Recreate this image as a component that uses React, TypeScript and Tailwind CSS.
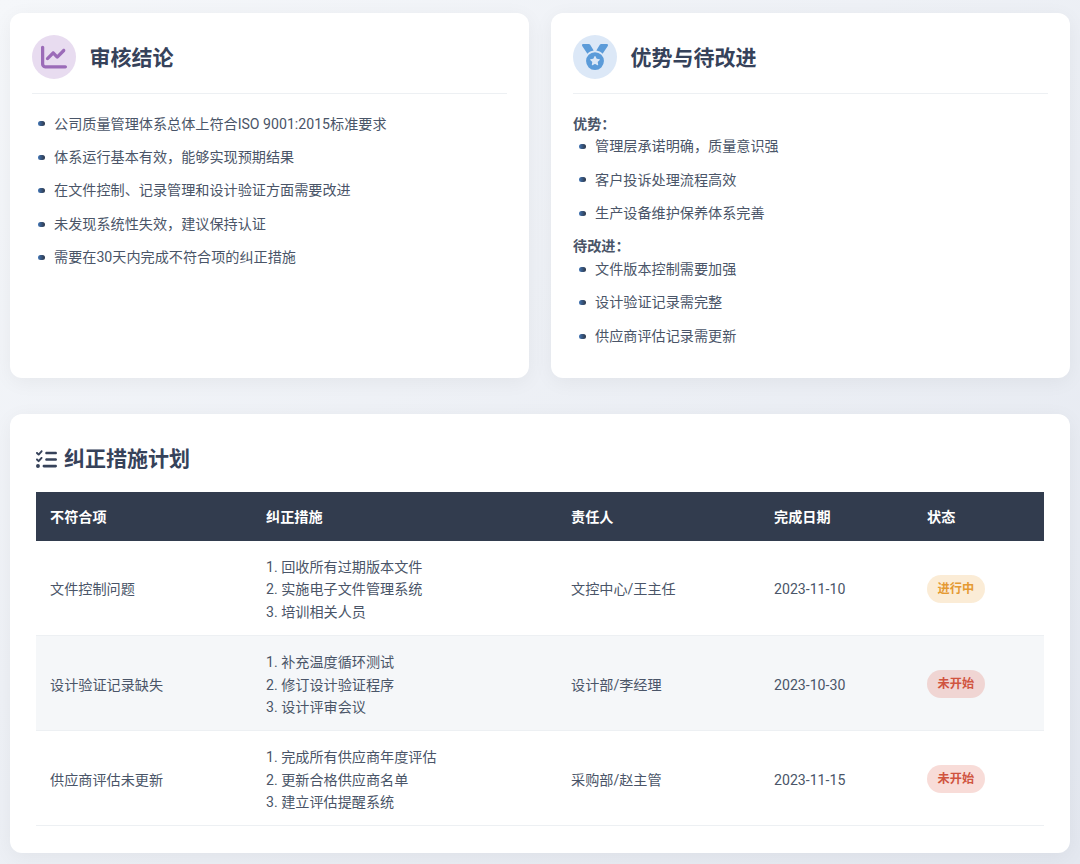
import { FaChartLine, FaMedal, FaListCheck } from 'react-icons/fa6';

const FONT = "font-['Roboto','Noto_Sans_CJK_SC',sans-serif]";

const CONCLUSIONS = [
  '公司质量管理体系总体上符合ISO 9001:2015标准要求',
  '体系运行基本有效\uFF0C能够实现预期结果',
  '在文件控制、记录管理和设计验证方面需要改进',
  '未发现系统性失效\uFF0C建议保持认证',
  '需要在30天内完成不符合项的纠正措施',
];

const STRENGTHS = ['管理层承诺明确\uFF0C质量意识强', '客户投诉处理流程高效', '生产设备维护保养体系完善'];
const IMPROVE = ['文件版本控制需要加强', '设计验证记录需完整', '供应商评估记录需更新'];

const ROWS = [
  {
    item: '文件控制问题',
    actions: ['1. 回收所有过期版本文件', '2. 实施电子文件管理系统', '3. 培训相关人员'],
    owner: '文控中心/王主任',
    date: '2023-11-10',
    status: '进行中',
  },
  {
    item: '设计验证记录缺失',
    actions: ['1. 补充温度循环测试', '2. 修订设计验证程序', '3. 设计评审会议'],
    owner: '设计部/李经理',
    date: '2023-10-30',
    status: '未开始',
  },
  {
    item: '供应商评估未更新',
    actions: ['1. 完成所有供应商年度评估', '2. 更新合格供应商名单', '3. 建立评估提醒系统'],
    owner: '采购部/赵主管',
    date: '2023-11-15',
    status: '未开始',
  },
];

function Bullets({ items }: { items: string[] }) {
  return (
    <ul className="flex flex-col gap-[10.8px]">
      {items.map((text) => (
        <li key={text} className="flex items-center pl-[6px] text-[14.14px] leading-[22.6px] text-[#4a5568]">
          <span className="mr-[9px] h-[5px] w-[7px] rounded-full bg-gradient-to-r from-[#3f74b5] to-[#2d3748]" />
          {text}
        </li>
      ))}
    </ul>
  );
}

function CardHeader({ icon, circle, title }: { icon: React.ReactNode; circle: string; title: string }) {
  return (
    <div className="mb-[18.6px] flex items-center gap-[13.5px] border-b border-[#edf0f3] pb-[14px]">
      <div className={`flex h-[44px] w-[44px] items-center justify-center rounded-full ${circle}`}>{icon}</div>
      <h2 className="pt-[3px] text-[21px] leading-[33px] font-bold text-[#36425a]">{title}</h2>
    </div>
  );
}

export default function App() {
  return (
    <div className={`${FONT} min-h-[864px] bg-gradient-to-br from-[#f5f7fa] to-[#e4e8f0] px-[10px] pt-[13px] pb-[11px]`}>
      <div className="grid grid-cols-2 gap-[22px]">
        <section className="h-[365px] rounded-[12px] bg-white p-[22px] shadow-[0_4px_20px_rgba(0,0,0,0.05)]">
          <CardHeader
            icon={<FaChartLine className="h-[26px] w-[26px] text-[#9b6bb8]" />}
            circle="bg-[#e8dcf0]"
            title="审核结论"
          />
          <Bullets items={CONCLUSIONS} />
        </section>

        <section className="h-[365px] rounded-[12px] bg-white p-[22px] shadow-[0_4px_20px_rgba(0,0,0,0.05)]">
          <CardHeader
            icon={<FaMedal className="h-[26px] w-[26px] text-[#5b9bd9]" />}
            circle="bg-[#dce8f7]"
            title="优势与待改进"
          />
          <p className="text-[14.14px] leading-[22.6px] font-bold text-[#4a5568]">{'优势\uFF1A'}</p>
          <Bullets items={STRENGTHS} />
          <p className="mt-[10.8px] text-[14.14px] leading-[22.6px] font-bold text-[#4a5568]">{'待改进\uFF1A'}</p>
          <Bullets items={IMPROVE} />
        </section>
      </div>

      <section className="mt-[36px] h-[439px] rounded-[12px] bg-white px-[26px] pt-[29px] shadow-[0_4px_20px_rgba(0,0,0,0.05)]">
        <h2 className="mb-[15.5px] flex items-center gap-[7px] text-[21px] leading-[33px] font-bold text-[#36425a]">
          <FaListCheck className="h-[21px] w-[21px]" />
          纠正措施计划
        </h2>
        <table className="w-full table-fixed border-collapse text-left text-[14.14px] leading-[22.6px]">
          <colgroup>
            <col className="w-[216px]" />
            <col className="w-[305px]" />
            <col className="w-[203px]" />
            <col className="w-[153px]" />
            <col className="w-[131px]" />
          </colgroup>
          <thead className="bg-[#323c4e] text-white">
            <tr>
              {['不符合项', '纠正措施', '责任人', '完成日期', '状态'].map((h) => (
                <th key={h} className="px-[14px] pt-[14px] pb-[12.8px] font-bold">
                  {h}
                </th>
              ))}
            </tr>
          </thead>
          <tbody className="text-[#4a5568]">
            {ROWS.map((row, i) => (
              <tr key={row.item} className={`border-b border-[#edf0f3] ${i === 1 ? 'bg-[#f5f7f9]' : 'bg-white'}`}>
                <td className="px-[14px] pt-[15px] pb-[11.4px]">{row.item}</td>
                <td className="px-[14px] pt-[15px] pb-[11.4px]">
                  {row.actions.map((a) => (
                    <div key={a}>{a}</div>
                  ))}
                </td>
                <td className="px-[14px] pt-[15px] pb-[11.4px]">{row.owner}</td>
                <td className="px-[14px] pt-[15px] pb-[11.4px]">{row.date}</td>
                <td className="px-[14px] pt-[14px] pb-[12.4px]">
                  <span
                    className={`inline-block rounded-full px-[10.6px] py-[4px] text-[12.2px] leading-[20px] font-bold ${
                      row.status === '进行中' ? 'bg-[rgba(232,150,30,0.18)] text-[#e59a33]' : 'bg-[rgba(222,80,60,0.2)] text-[#d0543f]'
                    }`}
                  >
                    {row.status}
                  </span>
                </td>
              </tr>
            ))}
          </tbody>
        </table>
      </section>
    </div>
  );
}
